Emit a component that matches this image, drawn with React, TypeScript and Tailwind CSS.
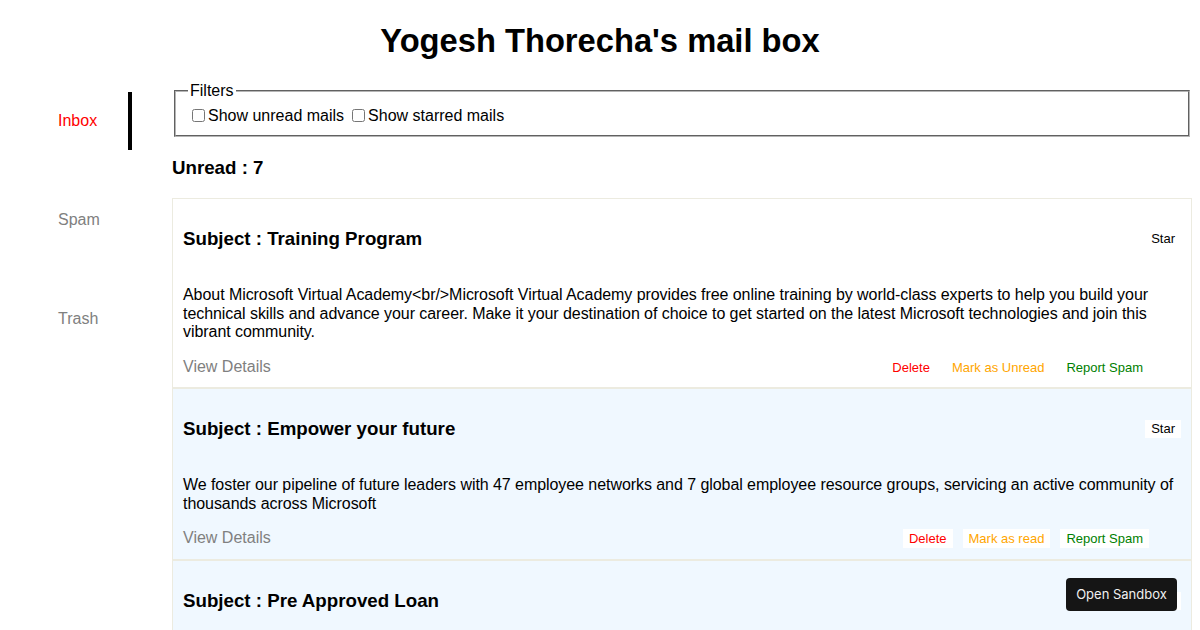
import { useState } from 'react';

type Mail = {
  id: number;
  subject: string;
  body: string;
  unread: boolean;
};

const mails: Mail[] = [
  {
    id: 1,
    subject: 'Training Program',
    body: 'About Microsoft Virtual Academy<br/>Microsoft Virtual Academy provides free online training by world-class experts to help you build your technical skills and advance your career. Make it your destination of choice to get started on the latest Microsoft technologies and join this vibrant community.',
    unread: false,
  },
  {
    id: 2,
    subject: 'Empower your future',
    body: 'We foster our pipeline of future leaders with 47 employee networks and 7 global employee resource groups, servicing an active community of thousands across Microsoft',
    unread: true,
  },
  {
    id: 3,
    subject: 'Pre Approved Loan',
    body: 'Congratulations! You are eligible for a pre approved personal loan. Check your offer and get the amount credited to your account instantly.',
    unread: true,
  },
];

const folders = ['Inbox', 'Spam', 'Trash'];

function MailCard({ mail }: { mail: Mail }) {
  return (
    <div
      className={`border border-[#ecebe0] px-[10px] pt-[29px] pb-[10.5px] ${
        mail.unread ? 'bg-[#f0f8ff]' : 'bg-white'
      }`}
    >
      <div className="flex items-center justify-between">
        <h3 className="text-[18.72px] leading-[22px] font-bold text-black">Subject : {mail.subject}</h3>
        <button className="bg-white px-[6px] h-[18px] text-[13px] leading-[18px] text-black">Star</button>
      </div>
      <p className="mt-[36px] text-[16px] leading-[18.5px] tracking-[-0.06px] text-black">{mail.body}</p>
      <div className="mt-[16px] flex items-center justify-between">
        <span className="text-[16px] leading-[18.4px] text-[#808080]">View Details</span>
        <div className="flex items-center gap-[10px] mr-[32px] text-[13px]">
          <button className="bg-white px-[6px] h-[19px] leading-[19px] text-[#ff0000]">Delete</button>
          <button className="bg-white px-[6px] h-[19px] leading-[19px] text-[#ffa500]">
            {mail.unread ? 'Mark as read' : 'Mark as Unread'}
          </button>
          <button className="bg-white px-[6px] h-[19px] leading-[19px] text-[#008000]">Report Spam</button>
        </div>
      </div>
    </div>
  );
}

export default function App() {
  const [active] = useState('Inbox');
  const unreadCount = 7;

  return (
    <div className="h-screen overflow-hidden bg-white font-['Liberation_Sans',Arial,sans-serif] text-black">
      <h1 className="pt-[22px] text-center text-[32.7px] leading-[37px] font-bold">Yogesh Thorecha's mail box</h1>

      <div className="mt-[23px] flex">
        <nav className="w-[132px] shrink-0 pt-[10px] flex flex-col gap-[41px]">
          {folders.map((f) => (
            <div
              key={f}
              className={`h-[58px] flex items-center pl-[58px] text-[16px] ${
                f === active ? 'border-r-4 border-black text-[#ff0000]' : 'text-[#808080]'
              }`}
            >
              {f}
            </div>
          ))}
        </nav>

        <main className="ml-[40px] w-[1020px]">
          <fieldset className="mx-[2px] px-[12px] pb-[10px] border-2 border-[#b5b5b5] [border-style:groove]">
            <legend className="px-[2px] text-[16px] leading-[18px]">Filters</legend>
            <div className="flex items-center text-[16px] leading-[19px] pt-[6px]">
              <label className="flex items-center">
                <input type="checkbox" className="ml-[4px] mr-[3px] w-[13px] h-[13px]" />
                Show unread mails
              </label>
              <label className="flex items-center ml-[4px]">
                <input type="checkbox" className="ml-[4px] mr-[3px] w-[13px] h-[13px]" />
                Show starred mails
              </label>
            </div>
          </fieldset>

          <h3 className="mt-[20px] mb-[19px] text-[18.72px] leading-[22px] font-bold">Unread : {unreadCount}</h3>

          <div className="flex flex-col">
            {mails.map((m) => (
              <MailCard key={m.id} mail={m} />
            ))}
          </div>
        </main>
      </div>

      <button className="fixed right-[23px] bottom-[19px] w-[111px] h-[33px] rounded-[4px] bg-[#151515] text-[13px] text-[#f0f0f0] font-['Inter',sans-serif]">
        Open Sandbox
      </button>
    </div>
  );
}
